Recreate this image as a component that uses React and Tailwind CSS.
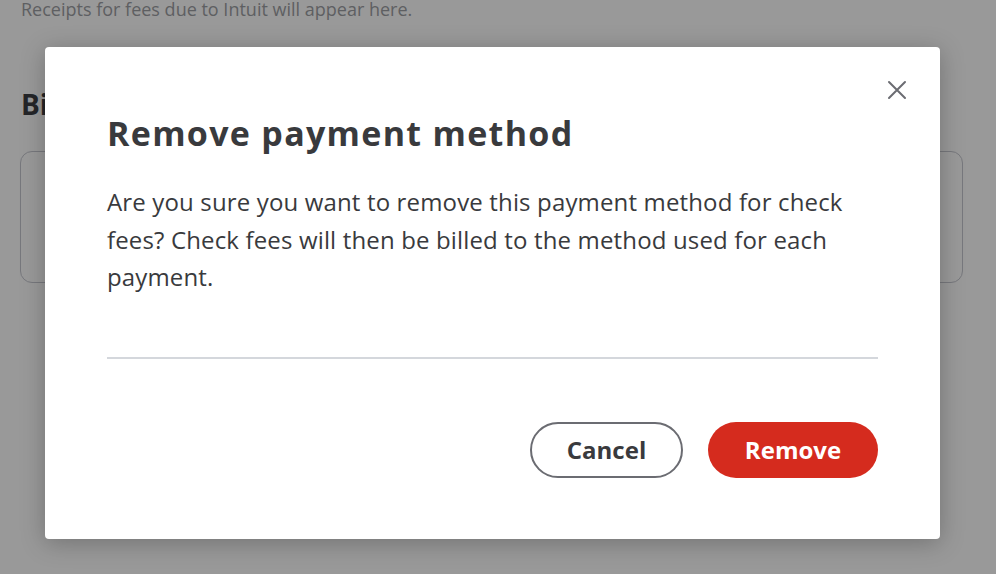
import React from 'react';

const font = { fontFamily: '"Open Sans", Lato, sans-serif' };

const App = () => {
  return (
    <div className="relative w-[996px] h-[574px] overflow-hidden bg-[#999999]" style={font}>
      {/* Page behind the overlay */}
      <div className="px-[20px]">
        <p className="pl-px -mt-[4px] text-[18px] leading-[26px] text-[#5e5f62]">
          Receipts for fees due to Intuit will appear here.
        </p>
        <h2 className="pl-px mt-[65px] text-[28px] leading-[34px] font-bold text-[#242528]">
          Billing
        </h2>
        <div className="mt-[30px] w-[943px] h-[132px] rounded-[12px] border border-[#77787d]" />
      </div>

      {/* Modal */}
      <div className="absolute left-[45px] top-[47px] w-[895px] h-[492px] bg-white rounded-[4px] shadow-[0_4px_24px_rgba(0,0,0,0.25)] px-[62px] pt-[66px]">
        <button className="absolute right-[32px] top-[32px] w-[22px] h-[22px] text-[#6b6c72]">
          <svg viewBox="0 0 22 22" className="w-[22px] h-[22px]" fill="none" stroke="currentColor" strokeWidth="2" strokeLinecap="round">
            <path d="M3 3l16 16M19 3L3 19" />
          </svg>
        </button>
        <h1 className="text-[34px] leading-[40px] font-bold tracking-[1.3px] text-[#393a3d]">Remove payment method</h1>
        <p className="mt-[30px] text-[24px] leading-[37.5px] tracking-[0.15px] text-[#393a3d]">
          Are you sure you want to remove this payment method for check fees? Check fees will then be billed to the method used for each payment.
        </p>
        <div className="mt-[61px] h-[2px] bg-[#d4d7dc]" />
        <div className="mt-[63px] flex justify-end gap-[25px]">
          <button className="w-[153px] h-[56px] rounded-full border-2 border-[#6b6c72] text-[24px] font-bold text-[#393a3d]">
            Cancel
          </button>
          <button className="w-[170px] h-[56px] rounded-full bg-[#d52b1e] text-[24px] font-bold text-white">
            Remove
          </button>
        </div>
      </div>
    </div>
  );
};

export default App;
